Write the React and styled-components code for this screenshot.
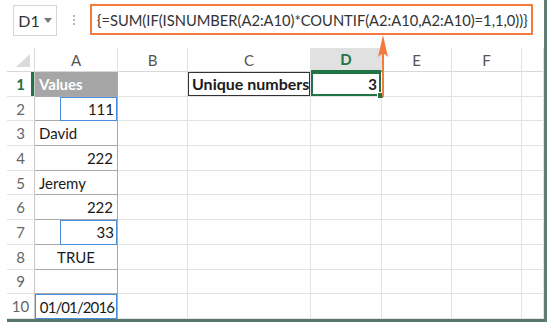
import React from 'react';
import styled, { createGlobalStyle, css } from 'styled-components';

const Global = createGlobalStyle`
  html, body { margin: 0; padding: 0; background: #fff; }
  body { font-family: Lato, "Open Sans", "Liberation Sans", sans-serif; }
  #root { width: 554px; height: 330px; }
`;

const Frame = styled.div`
  position: relative;
  width: 547px;
  height: 322px;
  box-sizing: border-box;
  border-right: 3px solid #5f7d75;
  padding-left: 7px;
  display: flex;
  flex-direction: column;
`;

const FormulaBar = styled.div`
  height: 48px;
  box-sizing: border-box;
  padding-top: 4px;
  display: flex;
  align-items: flex-start;
`;

const NameBox = styled.div`
  margin-left: 6px;
  margin-top: 1px;
  width: 44px;
  height: 31px;
  box-sizing: border-box;
  border: 1px solid #d6d6d6;
  display: flex;
  align-items: center;
  justify-content: center;
  gap: 4px;
  font-size: 16px;
  color: #333;
`;

const Caret = styled.span`
  width: 0;
  height: 0;
  border-left: 4px solid transparent;
  border-right: 4px solid transparent;
  border-top: 5px solid #777;
`;

const Dots = styled.div`
  width: 33px;
  height: 31px;
  display: flex;
  flex-direction: column;
  align-items: center;
  justify-content: center;
  gap: 2px;
  & > span { width: 2px; height: 2px; background: #9a9a9a; border-radius: 1px; }
`;

const FormulaInput = styled.div`
  width: 443px;
  height: 31px;
  box-sizing: border-box;
  border: 2.5px solid #f47b3d;
  display: flex;
  align-items: center;
  padding-left: 5px;
  font-size: 14.7px;
  color: #333;
  white-space: nowrap;
  overflow: hidden;
`;

const Sheet = styled.div`
  display: grid;
  grid-template-columns: 28px 83px 70px 123px 71px 70px 70px 22px;
  grid-template-rows: 24px repeat(10, 24.7px);
  border-bottom: 3px solid #56756d;
`;

const Cell = styled.div`
  position: relative;
  box-sizing: border-box;
  border-right: 1px solid #e3e3e3;
  border-bottom: 1px solid #e3e3e3;
  display: flex;
  align-items: center;
  font-size: 15px;
  color: #1a1a1a;
  white-space: nowrap;
  overflow: visible;
  padding: 0 4px;
  justify-content: ${p => (p.$align === 'right' ? 'flex-end' : p.$align === 'center' ? 'center' : 'flex-start')};
  ${p => p.$colA && css`border-right-color: #a9a9a9; border-bottom-color: #a9a9a9;`}
  ${p => p.$bold && css`font-weight: 700;`}
  ${p => p.$header && css`background: #a6a6a6; color: #fff; font-weight: 700;`}
  ${p => p.$boxed && css`font-size: 16px; box-shadow: inset 1px 1px 0 #333, inset -1px -1px 0 #333;`}
  ${p => p.$active && css`box-shadow: inset 0 0 0 2px #217346; border-right-color: transparent;`}
  ${p => p.$full && css`padding: 0;`}
`;

const ColHead = styled.div`
  box-sizing: border-box;
  border-right: 1px solid #e3e3e3;
  border-bottom: 1px solid #d9d9d9;
  display: flex;
  align-items: center;
  justify-content: center;
  font-size: 15px;
  color: #555;
  ${p => p.$active && css`background: #e1e1e1; color: #217346; font-weight: 700; border-bottom: 2px solid #217346;`}
`;

const Corner = styled.div`
  box-sizing: border-box;
  border-right: 1px solid #d9d9d9;
  border-bottom: 1px solid #d9d9d9;
  display: flex;
  align-items: flex-end;
  justify-content: flex-end;
  padding: 0 4px 4px 0;
`;

const RowHead = styled.div`
  box-sizing: border-box;
  border-right: 1px solid #c8c8c8;
  border-bottom: 1px solid #e3e3e3;
  display: flex;
  align-items: center;
  justify-content: center;
  font-size: 15px;
  color: #666;
  ${p => p.$active && css`color: #217346; font-weight: 700; box-shadow: inset -3px 0 0 #217346;`}
`;

const Highlight = styled.span`
  box-sizing: border-box;
  height: calc(100% + 1px);
  margin-bottom: -1px;
  width: ${p => (p.$wide ? '100%' : '57px')};
  border: 1.5px solid #4a8fdc;
  display: flex;
  align-items: center;
  justify-content: flex-end;
  padding-right: 2px;
  margin-right: ${p => (p.$wide ? '0' : '-4px')};
  letter-spacing: ${p => (p.$wide ? '-0.9px' : '0')};
`;

const FillHandle = styled.span`
  position: absolute;
  right: -3px;
  bottom: -3px;
  width: 5px;
  height: 5px;
  background: #217346;
  border: 1px solid #fff;
  z-index: 2;
`;

const Arrow = styled.svg`
  position: absolute;
  left: 377px;
  top: 35px;
  z-index: 3;
`;

const cols = ['A', 'B', 'C', 'D', 'E', 'F', ''];

const colA = [
  { v: 'Values', header: true },
  { v: '111', align: 'right', hl: 'part' },
  { v: 'David' },
  { v: '222', align: 'right' },
  { v: 'Jeremy' },
  { v: '222', align: 'right' },
  { v: '33', align: 'right', hl: 'part' },
  { v: 'TRUE', align: 'center' },
  { v: '' },
  { v: '01/01/2016', align: 'right', hl: 'full' },
];

export default function App() {
  return (
    <>
      <Global />
      <Frame>
        <FormulaBar>
          <NameBox>D1<Caret /></NameBox>
          <Dots><span /><span /><span /></Dots>
          <FormulaInput>{'{=SUM(IF(ISNUMBER(A2:A10)*COUNTIF(A2:A10,A2:A10)=1,1,0))}'}</FormulaInput>
        </FormulaBar>
        <Sheet>
          <Corner>
            <svg width="14" height="13" viewBox="0 0 14 13"><polygon points="14,0 14,13 0,13" fill="#dadada" /></svg>
          </Corner>
          {cols.map((c, i) => (
            <ColHead key={i} $active={c === 'D'}>{c}</ColHead>
          ))}
          {colA.map((a, r) => (
            <React.Fragment key={r}>
              <RowHead $active={r === 0}>{r + 1}</RowHead>
              {a.hl ? (
                <Cell $colA $align="right" $full={a.hl === 'full'}>
                  <Highlight $wide={a.hl === 'full'}>{a.v}</Highlight>
                </Cell>
              ) : (
                <Cell $colA $header={a.header} $align={a.align}>{a.v}</Cell>
              )}
              <Cell />
              {r === 0 ? <Cell $bold $boxed>Unique numbers</Cell> : <Cell />}
              {r === 0 ? (
                <Cell $bold $active $align="right">3<FillHandle /></Cell>
              ) : (
                <Cell />
              )}
              <Cell />
              <Cell />
              <Cell />
            </React.Fragment>
          ))}
        </Sheet>
        <Arrow width="12" height="63" viewBox="0 0 12 63">
          <line x1="6" y1="14" x2="6" y2="62" stroke="#f47b3d" strokeWidth="2" />
          <polygon points="6,0 11,22 6,18 1,22" fill="#f47b3d" />
        </Arrow>
      </Frame>
    </>
  );
}
